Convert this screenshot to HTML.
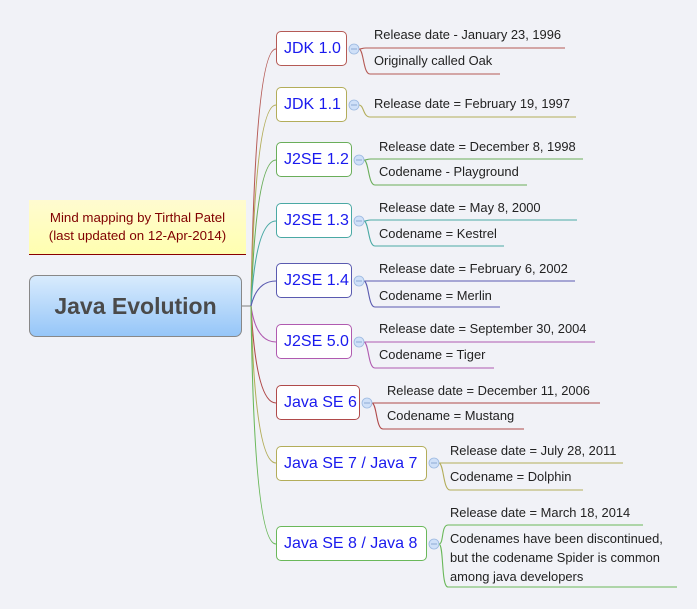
<!DOCTYPE html>
<html><head><meta charset="utf-8"><style>
html,body{margin:0;padding:0}
body{width:697px;height:609px;background:#f1f2f7;position:relative;overflow:hidden;font-family:"Liberation Sans",sans-serif}
.n{position:absolute;left:276px;height:35px;background:#fff;border:1px solid;border-radius:5px;box-sizing:border-box;color:#1a1aee;font-size:16px;line-height:34px;padding-left:7px;white-space:nowrap}
.t{position:absolute;font-size:12.9px;color:#222;white-space:nowrap}
.note{position:absolute;left:29px;top:200px;width:217px;height:55px;background:linear-gradient(#fffbd0,#ffffb0);border-bottom:1px solid #800;box-sizing:border-box;color:#800000;font-size:13.3px;text-align:center;padding-top:9px;line-height:18px}
.main{position:absolute;left:29px;top:275px;width:213px;height:62px;border:1px solid #888;border-radius:7px;box-sizing:border-box;background:linear-gradient(#d8ebfd,#96c6f8);color:#4a4a4a;font-weight:bold;font-size:23px;text-align:center;line-height:60px}
</style></head><body>
<svg width="697" height="609" style="position:absolute;left:0;top:0" fill="none" stroke-width="1.1">
<path d="M242,306 H251" stroke="#888"/>
<path d="M251,306 Q255,49 276,49" stroke="#b55a55"/>
<path d="M251,306 Q255,105 276,105" stroke="#b3ad5a"/>
<path d="M251,306 Q256,160 276,160" stroke="#6aae5a"/>
<path d="M251,306 Q256,221 276,221" stroke="#4aa9a4"/>
<path d="M251,306 Q257,281 276,281" stroke="#5a5ab0"/>
<path d="M251,306 Q256,342 276,342" stroke="#b05ab0"/>
<path d="M251,306 Q256,403 276,403" stroke="#b04a4a"/>
<path d="M251,306 Q255,463 276,463" stroke="#b3ad5a"/>
<path d="M251,306 Q254,544 276,544" stroke="#6ab85a"/>

<g stroke="#b55a55"><path d="M359,49 C362,49 362,48 366,48 H565"/><path d="M359,49 C364,50 363,74 370,74 H500"/></g>
<g stroke="#b3ad5a"><path d="M359,105 C364,105 363,117 370,117 H576"/></g>
<g stroke="#6aae5a"><path d="M364,160 C367,160 367,159 371,159 H583"/><path d="M364,160 C369,161 368,185 375,185 H527"/></g>
<g stroke="#4aa9a4"><path d="M364,221 C367,221 367,220 371,220 H577"/><path d="M364,221 C369,222 368,246 375,246 H504"/></g>
<g stroke="#5a5ab0"><path d="M364,281 C367,281 367,281 371,281 H575"/><path d="M364,281 C369,282 368,307 375,307 H500"/></g>
<g stroke="#b05ab0"><path d="M364,342 C367,342 367,342 371,342 H595"/><path d="M364,342 C369,343 368,368 375,368 H494"/></g>
<g stroke="#b04a4a"><path d="M372,403 C375,403 375,403 379,403 H600"/><path d="M372,403 C377,404 376,429 383,429 H524"/></g>
<g stroke="#b3ad5a"><path d="M439,463 C442,463 442,463 446,463 H623"/><path d="M439,463 C444,464 443,490 450,490 H583"/></g>
<g stroke="#6ab85a"><path d="M439,544 C444,544 441,525 448,525 H643"/><path d="M439,544 C444,545 441,587 448,587 H677"/></g>

<g fill="#cfe0f8" stroke="#9bb8e0" stroke-width="0.8">
<circle cx="354" cy="49" r="5"/><circle cx="354" cy="105" r="5"/><circle cx="359" cy="160" r="5"/><circle cx="359" cy="221" r="5"/><circle cx="359" cy="281" r="5"/><circle cx="359" cy="342" r="5"/><circle cx="367" cy="403" r="5"/><circle cx="434" cy="463" r="5"/><circle cx="434" cy="544" r="5"/>
</g>
<g stroke="#7a98c8" stroke-width="0.8">
<path d="M351,49h6M351,105h6M356,160h6M356,221h6M356,281h6M356,342h6M364,403h6M431,463h6M431,544h6"/>
</g>
</svg>

<div class="note">Mind mapping by Tirthal Patel<br>(last updated on 12-Apr-2014)</div>
<div class="main">Java Evolution</div>

<div class="n" style="top:31px;width:71px;border-color:#b55a55">JDK 1.0</div>
<div class="n" style="top:87px;width:71px;border-color:#b3ad5a">JDK 1.1</div>
<div class="n" style="top:142px;width:76px;border-color:#6aae5a">J2SE 1.2</div>
<div class="n" style="top:203px;width:76px;border-color:#4aa9a4">J2SE 1.3</div>
<div class="n" style="top:263px;width:76px;border-color:#5a5ab0">J2SE 1.4</div>
<div class="n" style="top:324px;width:76px;border-color:#b05ab0">J2SE 5.0</div>
<div class="n" style="top:385px;width:84px;border-color:#b04a4a">Java SE 6</div>
<div class="n" style="top:446px;width:151px;border-color:#b3ad5a">Java SE 7 / Java 7</div>
<div class="n" style="top:526px;width:151px;border-color:#6ab85a">Java SE 8 / Java 8</div>

<div class="t" style="left:374px;top:27px">Release date - January 23, 1996</div>
<div class="t" style="left:374px;top:53px">Originally called Oak</div>
<div class="t" style="left:374px;top:96px">Release date = February 19, 1997</div>
<div class="t" style="left:379px;top:139px">Release date = December 8, 1998</div>
<div class="t" style="left:379px;top:164px">Codename - Playground</div>
<div class="t" style="left:379px;top:200px">Release date = May 8, 2000</div>
<div class="t" style="left:379px;top:226px">Codename = Kestrel</div>
<div class="t" style="left:379px;top:261px">Release date = February 6, 2002</div>
<div class="t" style="left:379px;top:288px">Codename = Merlin</div>
<div class="t" style="left:379px;top:321px">Release date = September 30, 2004</div>
<div class="t" style="left:379px;top:347px">Codename = Tiger</div>
<div class="t" style="left:387px;top:383px">Release date = December 11, 2006</div>
<div class="t" style="left:387px;top:408px">Codename = Mustang</div>
<div class="t" style="left:450px;top:443px">Release date = July 28, 2011</div>
<div class="t" style="left:450px;top:469px">Codename = Dolphin</div>
<div class="t" style="left:450px;top:505px">Release date = March 18, 2014</div>
<div class="t" style="left:450px;top:529px;line-height:19px">Codenames have been discontinued,<br>but the codename Spider is common<br>among java developers</div>
</body></html>
